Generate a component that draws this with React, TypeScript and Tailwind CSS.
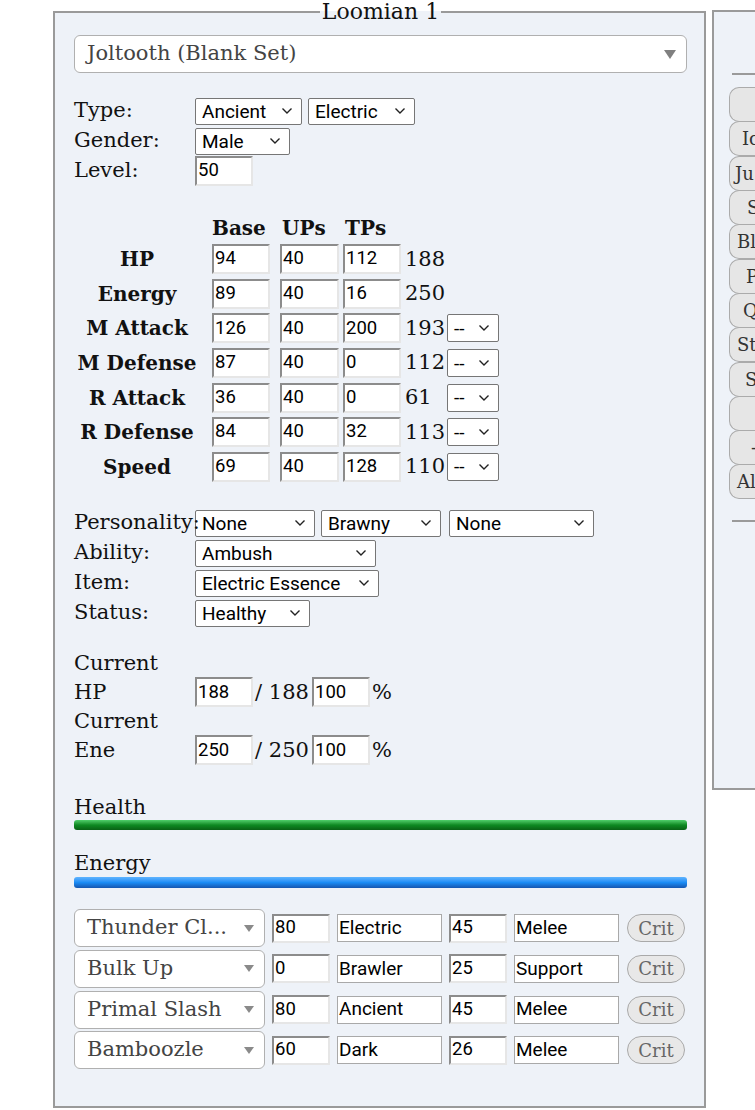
import React from "react";

const SERIF = "font-['DejaVu_Serif','Liberation_Serif',serif]";
const SANS = "font-['Roboto','Liberation_Sans',sans-serif]";

function Chevron() {
  return (
    <svg width="12" height="8" viewBox="0 0 12 8" className="shrink-0">
      <path d="M1.5 1.5 L6 6 L10.5 1.5" fill="none" stroke="#222" strokeWidth="1.4" />
    </svg>
  );
}

function Select({ value, w, h = 27 }: { value: string; w: number; h?: number }) {
  return (
    <div
      className={`flex items-center justify-between rounded-[2px] border border-[#767676] bg-white pl-[6px] pr-[8px] text-[19px] text-black ${SANS}`}
      style={{ width: w, height: h }}
    >
      <span className="whitespace-nowrap leading-none">{value}</span>
      <Chevron />
    </div>
  );
}

function Inset({ value, w = 58, h = 30 }: { value: string; w?: number; h?: number }) {
  return (
    <div
      className={`flex items-center border-2 border-t-[#8c8c8c] border-l-[#8c8c8c] border-b-[#e6e6e6] border-r-[#e6e6e6] bg-white pl-[1px] text-[18.5px] text-black ${SANS}`}
      style={{ width: w, height: h }}
    >
      {value}
    </div>
  );
}

function Flat({ value, w }: { value: string; w: number }) {
  return (
    <div
      className={`flex h-[28px] items-center border border-[#a9a9a9] bg-white pl-[1px] text-[19px] text-black ${SANS}`}
      style={{ width: w }}
    >
      {value}
    </div>
  );
}

const stats = [
  { name: "HP", base: "94", ups: "40", tps: "112", total: "188", sel: false },
  { name: "Energy", base: "89", ups: "40", tps: "16", total: "250", sel: false },
  { name: "M Attack", base: "126", ups: "40", tps: "200", total: "193", sel: true },
  { name: "M Defense", base: "87", ups: "40", tps: "0", total: "112", sel: true },
  { name: "R Attack", base: "36", ups: "40", tps: "0", total: "61", sel: true },
  { name: "R Defense", base: "84", ups: "40", tps: "32", total: "113", sel: true },
  { name: "Speed", base: "69", ups: "40", tps: "128", total: "110", sel: true },
];

const moves = [
  { name: "Thunder Cl...", power: "80", type: "Electric", energy: "45", kind: "Melee" },
  { name: "Bulk Up", power: "0", type: "Brawler", energy: "25", kind: "Support" },
  { name: "Primal Slash", power: "80", type: "Ancient", energy: "45", kind: "Melee" },
  { name: "Bamboozle", power: "60", type: "Dark", energy: "26", kind: "Melee" },
];

// right-hand tab column, only the first letters fit in the window
const sideButtons = [
  { t: "", pl: 0 },
  { t: "Ic", pl: 12 },
  { t: "Ju", pl: 5 },
  { t: "S", pl: 17 },
  { t: "Bl", pl: 7 },
  { t: "P", pl: 16 },
  { t: "Q", pl: 13 },
  { t: "St", pl: 7 },
  { t: "S", pl: 15 },
  { t: "", pl: 0 },
  { t: "-", pl: 21 },
  { t: "Al", pl: 7 },
];

function Row({ label, children }: { label: string; children?: React.ReactNode }) {
  return (
    <div className="flex h-[30px] items-center">
      <div className="relative z-10 w-[121px] shrink-0 whitespace-nowrap text-[21px]">{label}</div>
      <div className="flex items-center gap-[6px]">{children}</div>
    </div>
  );
}

export default function App() {
  return (
    <div className={`relative h-[1110px] w-[755px] overflow-hidden bg-white text-[20px] text-[#111] ${SERIF}`}>
      <div className="flex items-start pl-[53px]">
        {/* Loomian panel */}
        <fieldset className="h-[1108px] w-[653px] min-w-0 shrink-0 border-2 border-[#9a9a9a] bg-[#eef2f8] pl-[19px] pr-[17px]">
          <legend className="mx-auto px-[2px] text-[22px] leading-[24px] text-[#111]">Loomian 1</legend>

          <div className="mt-[11px] flex h-[38px] items-center justify-between rounded-[6px] border border-[#b0b0b0] bg-white pl-[12px] pr-[10px] text-[21px] text-[#444]">
            <span>Joltooth (Blank Set)</span>
            <svg width="12" height="9" viewBox="0 0 12 9">
              <path d="M0 0 H12 L6 9 Z" fill="#808080" />
            </svg>
          </div>

          <div className="mt-[23px]">
            <Row label="Type:">
              <Select value="Ancient" w={107} />
              <Select value="Electric" w={107} />
            </Row>
            <Row label="Gender:">
              <Select value="Male" w={95} />
            </Row>
            <Row label="Level:">
              <Inset value="50" />
            </Row>
          </div>

          {/* stats table */}
          <div className="mt-[27px]">
            <div className="flex h-[29px] items-center font-bold">
              <div className="w-[138px] shrink-0" />
              <div className="w-[70px] shrink-0">Base</div>
              <div className="w-[63px] shrink-0">UPs</div>
              <div>TPs</div>
            </div>
            {stats.map((s) => (
              <div key={s.name} className="flex h-[34.6px] items-center">
                <div className="w-[126px] shrink-0 whitespace-nowrap text-center font-bold">{s.name}</div>
                <div className="ml-[12px] flex items-center">
                  <Inset value={s.base} w={58} />
                  <div className="ml-[10px]">
                    <Inset value={s.ups} w={59} />
                  </div>
                  <div className="ml-[4px]">
                    <Inset value={s.tps} w={58} />
                  </div>
                  <div className="ml-[4px] w-[42px] text-[21px]">{s.total}</div>
                  {s.sel && <Select value="--" w={52} h={28} />}
                </div>
              </div>
            ))}
          </div>

          <div className="mt-[24px]">
            <Row label="Personality:">
              <Select value="None" w={120} />
              <Select value="Brawny" w={120} />
              <div className="ml-[2px]">
                <Select value="None" w={145} />
              </div>
            </Row>
            <Row label="Ability:">
              <Select value="Ambush" w={181} />
            </Row>
            <Row label="Item:">
              <Select value="Electric Essence" w={184} />
            </Row>
            <Row label="Status:">
              <Select value="Healthy" w={115} />
            </Row>
          </div>

          {/* current values */}
          <div className="mt-[21px] text-[21px]">
            {[
              { l: "HP", v: "188" },
              { l: "Ene", v: "250" },
            ].map((c) => (
              <div key={c.l} className="flex items-end leading-[29px]">
                <div className="w-[121px] shrink-0">
                  <div>Current</div>
                  <div>{c.l}</div>
                </div>
                <div className="flex items-center">
                  <Inset value={c.v} w={58} />
                  <span className="ml-[2px] w-[57px] whitespace-pre">/ {c.v}</span>
                  <Inset value="100" w={58} />
                  <span className="ml-[2px]">%</span>
                </div>
              </div>
            ))}
          </div>

          {/* bars */}
          <div className="mt-[29px] text-[21px] leading-[26px]">Health</div>
          <div className="h-[10px] w-full rounded-[3px] bg-linear-to-b from-[#4fcf6b] via-[#0d8a22] to-[#0a6116]" />
          <div className="mt-[20px] text-[21px] leading-[26px]">Energy</div>
          <div className="mt-[1px] h-[11px] w-full rounded-[3px] bg-linear-to-b from-[#5eb4ff] via-[#1a8cf5] to-[#1556b0]" />

          {/* moves */}
          <div className="mt-[21px] flex flex-col gap-[2.7px]">
            {moves.map((m) => (
              <div key={m.name} className="flex h-[38px] items-center">
                <div className="flex h-[38px] w-[191px] shrink-0 items-center justify-between rounded-[6px] border border-[#b0b0b0] bg-white pl-[12px] pr-[10px] text-[21px] text-[#444]">
                  <span className="whitespace-nowrap">{m.name}</span>
                  <svg width="10" height="7" viewBox="0 0 10 7">
                    <path d="M0 0 H10 L5 7 Z" fill="#8a8a8a" />
                  </svg>
                </div>
                <div className="ml-[7px]">
                  <Inset value={m.power} w={58} h={29} />
                </div>
                <div className="ml-[7px]">
                  <Flat value={m.type} w={105} />
                </div>
                <div className="ml-[7px]">
                  <Inset value={m.energy} w={58} h={29} />
                </div>
                <div className="ml-[7px]">
                  <Flat value={m.kind} w={105} />
                </div>
                <div className="ml-[8px] flex h-[28px] w-[58px] shrink-0 items-center justify-center rounded-full border border-[#a9a9a9] bg-[#e8e8e8] text-[18px] text-[#666]">
                  Crit
                </div>
              </div>
            ))}
          </div>
        </fieldset>

        {/* side panel */}
        <div className="ml-[6px] mt-[10px] h-[780px] w-[43px] shrink-0 border-2 border-r-0 border-[#9a9a9a] bg-[#eef2f8] pl-[15px]">
          <div className="mt-[61px] ml-[3px] h-[2px] bg-[#9a9a9a]" />
          <div className="mt-[12px] flex flex-col">
            {sideButtons.map((b, i) => (
              <div
                key={i}
                className="-mb-[0.7px] flex h-[35px] items-center rounded-l-[10px] border border-r-0 border-[#ababab] bg-[#e6e6e6] text-[18px] text-[#333]"
                style={{ paddingLeft: b.pl }}
              >
                <span className="whitespace-nowrap">{b.t}</span>
              </div>
            ))}
          </div>
          <div className="mt-[21px] ml-[3px] h-[2px] bg-[#9a9a9a]" />
        </div>
      </div>
    </div>
  );
}
